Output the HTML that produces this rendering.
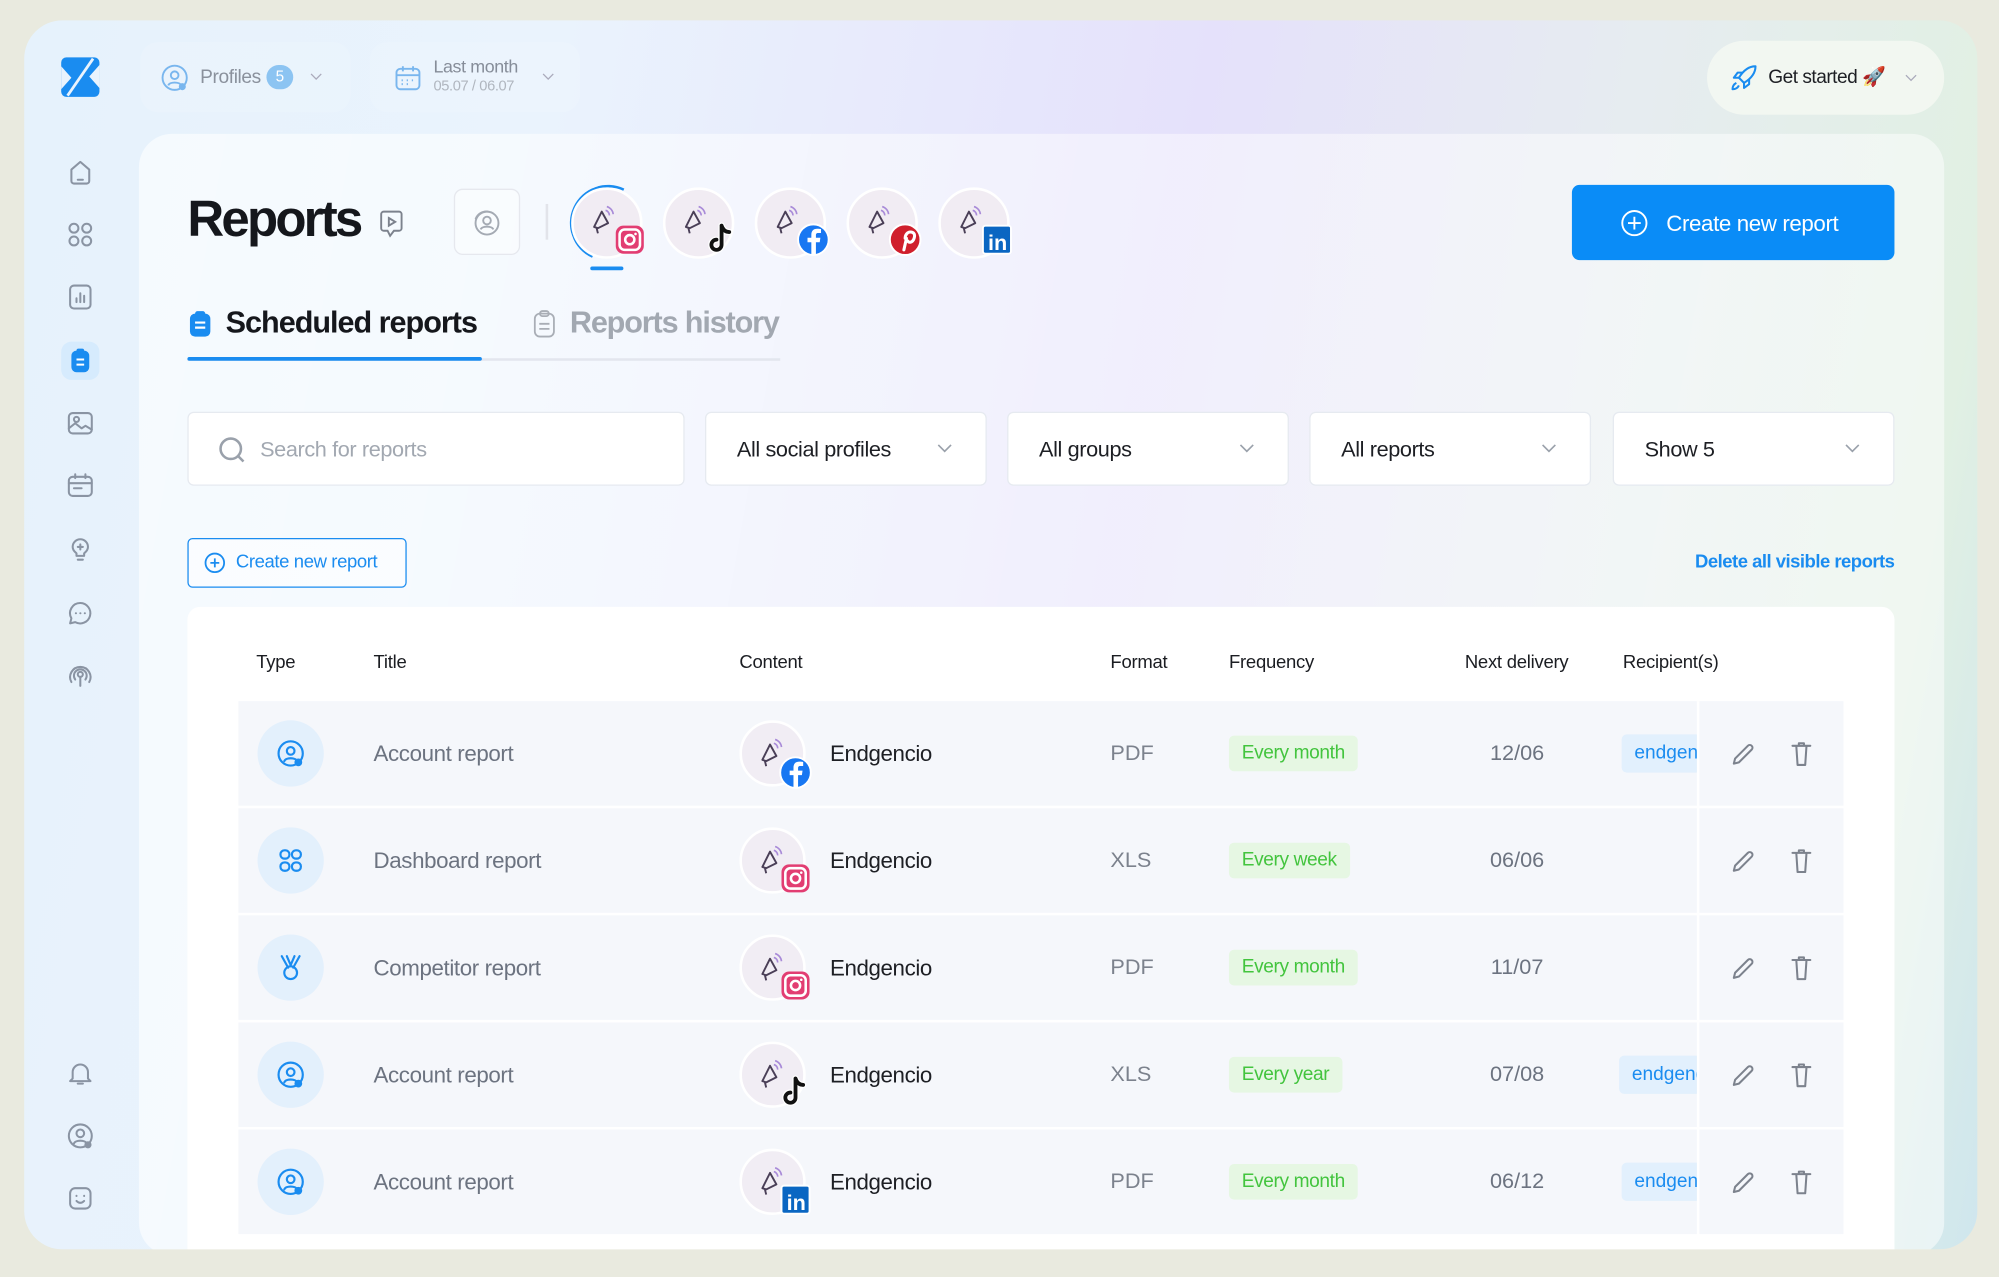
<!DOCTYPE html>
<html><head><meta charset="utf-8">
<style>
*{margin:0;padding:0;box-sizing:border-box}
html,body{width:1999px;height:1277px;overflow:hidden;background:#e9eadf;font-family:"Liberation Sans",sans-serif}
#w{position:absolute;left:0;top:0;width:1568px;height:1002px;transform:scale(1.27487);transform-origin:0 0}
.a{position:absolute}
#card{left:19px;top:16px;width:1532px;height:964px;border-radius:30px;overflow:hidden;
background:linear-gradient(100deg,#e6f2fc 0%,#eaf3fd 25%,#e5e1fb 55%,#e6ecf0 75%,#e1f0e3 92%,#cfe6ee 100%)}
#main{border-radius:26px;background:linear-gradient(100deg,rgba(255,255,255,.6),rgba(255,255,255,.45) 50%,rgba(255,255,255,.5))}
.chip{border-radius:14px;background:rgba(255,255,255,.12)}
.sb svg{position:absolute;width:22px;height:22px;fill:none;stroke:#8a94a3;stroke-width:1.6;stroke-linecap:round;stroke-linejoin:round}
.dd{background:#fff;border:1px solid #e6eaf0;border-radius:5px;height:58px;top:323px;font-size:17px;color:#1d1f24;letter-spacing:-.3px}
.dd span{position:absolute;left:24px;top:19px}
.dd svg{position:absolute;right:26px;top:24px}
.th{top:512px;font-size:14.5px;color:#1b1d22;letter-spacing:-.2px}
.row{left:187px;width:1259px;height:82px;background:#f5f7fb}
.ti{width:52px;height:52px;border-radius:50%;background:#e3f0fc;left:202px}
.ti svg{position:absolute;left:14px;top:14px;width:24px;height:24px;fill:none;stroke:#1a8cf0;stroke-width:1.7;stroke-linecap:round}
.tt{left:293px;font-size:17.5px;color:#6c7380;letter-spacing:-.3px}
.av{width:52px;height:52px;border-radius:50%;background:#f1edf4;border:2px solid #fff;left:580px}
.en{left:651px;font-size:17.5px;color:#1d1f24;letter-spacing:-.3px}
.fm{left:871px;font-size:17px;color:#7c828d}
.fq{height:28px;border-radius:4px;background:#e6f7e3;color:#43c43e;font-size:15px;padding:5px 10px;letter-spacing:-.3px}
.dt{font-size:17px;color:#6c7380;width:80px;text-align:center;left:1150px}
.rc{left:1272px;width:59px;height:30px;border-radius:4px 0 0 4px;background:#e2f0fd;color:#1a8cf0;font-size:15px;padding:6px 0 0 10px;overflow:hidden;white-space:nowrap}
.ic{fill:none;stroke:#7c828d;stroke-width:1.6;stroke-linecap:round;stroke-linejoin:round}
.soc{width:56px;height:56px;border-radius:50%;background:#f1ecf3;border:2px solid #fff;top:147px}
</style></head><body><div id="w">
<div id="card" class="a"></div>
<div id="main" class="a" style="left:109px;top:105px;width:1416px;height:880px"></div>

<!-- logo -->
<svg class="a" style="left:47px;top:44px" width="32" height="33" viewBox="0 0 32 33"><rect x="1" y="1" width="30" height="31" rx="4" fill="#1a8cf0"/><path d="M1 8 L9 17 L1 26Z M31 7 L23 16 L31 25Z" fill="#e9f3fd"/><path d="M26 2 L6 31" stroke="#e9f3fd" stroke-width="2.2"/></svg>

<!-- top chips -->
<div class="a chip" style="left:110px;top:33px;width:165px;height:55px"></div>
<svg class="a" style="left:126px;top:50px" width="22" height="22" viewBox="0 0 22 22" fill="none" stroke="#79b6ee" stroke-width="1.5"><circle cx="11" cy="11" r="9.5"/><circle cx="11" cy="9" r="3"/><path d="M6 17c1-3 9-3 10 0"/><circle cx="17" cy="18" r="2" fill="#79b6ee"/></svg>
<div class="a" style="left:157px;top:52px;font-size:15px;color:#8a919c;letter-spacing:-.3px">Profiles</div>
<div class="a" style="left:209px;top:51px;width:21px;height:19px;border-radius:10px;background:#8cc4f2;color:#fff;font-size:12px;text-align:center;line-height:19px">5</div>
<svg class="a" style="left:243px;top:57px" width="10" height="6"><path d="M1 1l4 4 4-4" stroke="#aab" fill="none"/></svg>
<div class="a chip" style="left:290px;top:33px;width:165px;height:55px"></div>
<svg class="a" style="left:309px;top:50px" width="22" height="22" viewBox="0 0 22 22" fill="none" stroke="#79b6ee" stroke-width="1.5"><rect x="2" y="4" width="18" height="16" rx="3"/><path d="M2 9h18M7 2v4M15 2v4M6 13h1M10 13h1M14 13h1M6 16h1M10 16h1"/></svg>
<div class="a" style="left:340px;top:44px;font-size:14px;color:#868d99;letter-spacing:-.3px">Last month</div>
<div class="a" style="left:340px;top:62px;font-size:11.5px;color:#b0b6bf;letter-spacing:-.3px">05.07 / 06.07</div>
<svg class="a" style="left:425px;top:57px" width="10" height="6"><path d="M1 1l4 4 4-4" stroke="#aab" fill="none"/></svg>

<!-- get started -->
<div class="a" style="left:1339px;top:32px;width:186px;height:58px;border-radius:29px;background:rgba(244,248,242,.85)"></div>
<svg class="a" style="left:1357px;top:50px" width="22" height="22" viewBox="0 0 22 22" fill="none" stroke="#1a8cf0" stroke-width="1.6" stroke-linejoin="round"><path d="M20 2c-6 0-10 4-13 9l4 4c5-3 9-7 9-13z"/><path d="M7 11l-4 0 3-4h4M11 15v4l4-3v-4"/><path d="M5 15c-2 1-3 3-3 5 2 0 4-1 5-3"/></svg>
<div class="a" style="left:1387px;top:51px;font-size:15px;color:#1d1f24;letter-spacing:-.4px">Get started 🚀</div>
<svg class="a" style="left:1494px;top:58px" width="10" height="6"><path d="M1 1l4 4 4-4" stroke="#aab" fill="none"/></svg>

<!-- sidebar -->
<div class="sb">
<svg style="left:52px;top:124px" viewBox="0 0 22 22"><path d="M4 9l7-6 7 6v9a2 2 0 01-2 2H6a2 2 0 01-2-2z"/><path d="M9 17h4"/></svg>
<svg style="left:52px;top:173px" viewBox="0 0 22 22"><circle cx="6" cy="6" r="3.5"/><circle cx="16" cy="6" r="3.5"/><circle cx="6" cy="16" r="3.5"/><circle cx="16" cy="16" r="3.5"/></svg>
<svg style="left:52px;top:222px" viewBox="0 0 22 22"><rect x="3" y="2" width="16" height="18" rx="3"/><path d="M8 15v-3M11 15V8M14 15v-5"/></svg>
<svg style="left:52px;top:321px" viewBox="0 0 22 22"><rect x="2" y="3" width="18" height="16" rx="3"/><circle cx="8" cy="8" r="2"/><path d="M2 15l5-4 5 4 3-2 5 3"/></svg>
<svg style="left:52px;top:370px" viewBox="0 0 22 22"><rect x="2" y="4" width="18" height="15" rx="3"/><path d="M2 9h18M7 2v3M15 2v3M6 13h6"/></svg>
<svg style="left:52px;top:420px" viewBox="0 0 22 22"><path d="M5 9a6 6 0 0112 0c0 3-2 4-3 5v2H8v-2c-1-1-3-2-3-5z"/><path d="M9 19h4M11 7v4M9 9h4"/></svg>
<svg style="left:52px;top:470px" viewBox="0 0 22 22"><path d="M11 3a8 8 0 00-7 12l-1 4 4-1a8 8 0 104-15z"/><path d="M7.5 11h.1M11 11h.1M14.5 11h.1"/></svg>
<svg style="left:52px;top:519px" viewBox="0 0 22 22"><circle cx="11" cy="10" r="2"/><path d="M11 12v7M7 14a5 5 0 118 0M4 16a8 8 0 1114 0"/></svg>
<svg style="left:52px;top:831px" viewBox="0 0 22 22"><path d="M5 15V10a6 6 0 0112 0v5l2 2H3z"/><path d="M9 19h4"/></svg>
<svg style="left:52px;top:880px" viewBox="0 0 22 22"><circle cx="11" cy="11" r="9"/><circle cx="11" cy="9" r="3"/><path d="M6 17c1-3 9-3 10 0"/><circle cx="17" cy="18" r="2" fill="#8a94a3"/></svg>
<svg style="left:52px;top:929px" viewBox="0 0 22 22"><rect x="3" y="3" width="16" height="16" rx="4"/><path d="M8 9v.1M14 9v.1M8 13c2 2 4 2 6 0"/></svg>
</div>
<div class="a" style="left:48px;top:268px;width:30px;height:30px;border-radius:8px;background:#d6ebfd"></div>
<svg class="a" style="left:54px;top:273px" width="18" height="20" viewBox="0 0 18 20"><rect x="2" y="2" width="14" height="17" rx="4" fill="#1a8cf0"/><rect x="6" y="0.5" width="6" height="3" rx="1.5" fill="#1a8cf0"/><path d="M6 9h6M6 13h6" stroke="#fff" stroke-width="1.6"/></svg>

<!-- title -->
<div class="a" style="left:147px;top:150px;font-size:40px;font-weight:bold;color:#15171c;letter-spacing:-2.2px">Reports</div>
<svg class="a" style="left:296px;top:164px" width="22" height="24" viewBox="0 0 22 24" fill="none" stroke="#7c828d" stroke-width="1.5"><path d="M3 4a2 2 0 012-2h12a2 2 0 012 2v11a2 2 0 01-2 2h-4l-3 4-2-4H5a2 2 0 01-2-2z"/><path d="M9 7l5 3-5 3z"/></svg>
<div class="a" style="left:356px;top:148px;width:52px;height:52px;border-radius:7px;border:1px solid #e6e8ee;background:rgba(255,255,255,.4)"></div>
<svg class="a" style="left:370px;top:163px" width="24" height="24" viewBox="0 0 24 24" fill="none" stroke="#a4aab3" stroke-width="1.5"><circle cx="12" cy="12" r="9"/><circle cx="12" cy="10" r="3"/><path d="M7 17c1-3 9-3 10 0"/><path d="M3 9a9 9 0 0110-6"/></svg>
<div class="a" style="left:428px;top:160px;width:2px;height:28px;background:#e2e4ea"></div>

<!-- social circles -->
<div class="a" style="left:447px;top:145px;width:60px;height:60px;border-radius:50%;border:2px solid #1a8cf0;border-right-color:transparent;border-bottom-color:transparent;transform:rotate(-20deg)"></div>
<div class="a" style="left:463px;top:209px;width:26px;height:3px;background:#1a8cf0;border-radius:2px"></div>

<svg width="0" height="0" style="position:absolute"><defs>
<g id="mg"><path d="M-6 4l6-12 5 9-8 4z M-4 5l1 4" fill="none" stroke="#4a3f57" stroke-width="1.5" stroke-linejoin="round"/><path d="M3-9a4 4 0 013 4M4-12a7 7 0 015 6" fill="none" stroke="#a98bd8" stroke-width="1.3"/></g>
<g id="ig"><rect x="-11" y="-11" width="22" height="22" rx="6" fill="#e23d72"/><rect x="-8" y="-8" width="16" height="16" rx="4" fill="none" stroke="#fff" stroke-width="2"/><circle r="3.6" fill="none" stroke="#fff" stroke-width="2"/><circle cx="4.5" cy="-4.5" r="1" fill="#fff"/></g>
<g id="fb"><circle r="12" fill="#1877f2" stroke="#fff" stroke-width="1.5"/><path d="M2 12V2h3l.5-3.5H2v-2c0-1 .4-1.7 1.8-1.7H6v-3.2c-.5 0-1.7-.2-3-.2-3 0-4.6 1.7-4.6 4.8v2.3h-3V2h3v10z" fill="#fff"/></g>
<g id="pi"><circle r="12" fill="#d01f2c" stroke="#fff" stroke-width="1.5"/><path d="M-1 8l2-9M0-1c0-3 2-5 4-5 3 0 4 2 3 5-1 3-4 4-5 2" fill="none" stroke="#fff" stroke-width="2.4" stroke-linecap="round"/></g>
<g id="li"><rect x="-11" y="-11" width="22" height="22" rx="2" fill="#0a66c2" stroke="#fff" stroke-width="1.5"/><text x="-7" y="8" font-family="Liberation Sans" font-weight="bold" font-size="17" fill="#fff">in</text></g>
<g id="tk"><path d="M0-11v15a4 4 0 11-4-4M0-11c1 3 3 5 6 5" fill="none" stroke="#fff" stroke-width="5" stroke-linecap="round"/><path d="M0-11v15a4 4 0 11-4-4M0-11c1 3 3 5 6 5" fill="none" stroke="#111" stroke-width="3" stroke-linecap="round"/></g>
</defs></svg>

<div class="a soc" style="left:448px"></div>
<div class="a soc" style="left:520px"></div>
<div class="a soc" style="left:592px"></div>
<div class="a soc" style="left:664px"></div>
<div class="a soc" style="left:736px"></div>
<svg class="a" style="left:440px;top:140px" width="370" height="80">
<use href="#mg" x="32" y="34"/><use href="#ig" x="54" y="48"/>
<use href="#mg" x="104" y="34"/><use href="#tk" x="126" y="48"/>
<use href="#mg" x="176" y="34"/><use href="#fb" x="198" y="48"/>
<use href="#mg" x="248" y="34"/><use href="#pi" x="270" y="48"/>
<use href="#mg" x="320" y="34"/><use href="#li" x="342" y="48"/>
</svg>

<!-- create button -->
<div class="a" style="left:1233px;top:145px;width:253px;height:59px;border-radius:6px;background:#0a8cf7"></div>
<svg class="a" style="left:1271px;top:164px" width="22" height="22" fill="none" stroke="#fff" stroke-width="1.5"><circle cx="11" cy="11" r="9.5"/><path d="M11 6v10M6 11h10"/></svg>
<div class="a" style="left:1307px;top:165px;font-size:17.5px;color:#fff;letter-spacing:-.3px">Create new report</div>

<!-- tabs -->
<svg class="a" style="left:148px;top:243px" width="18" height="22" viewBox="0 0 18 22"><rect x="1" y="3" width="16" height="18" rx="4" fill="#1a8cf0"/><rect x="5" y="1" width="8" height="4" rx="2" fill="#1a8cf0"/><path d="M5 10h8M5 14h8" stroke="#fff" stroke-width="1.7"/></svg>
<div class="a" style="left:177px;top:240px;font-size:24px;font-weight:bold;color:#15171c;letter-spacing:-.8px">Scheduled reports</div>
<svg class="a" style="left:418px;top:243px" width="18" height="22" viewBox="0 0 18 22" fill="none" stroke="#a9aeb6" stroke-width="1.4"><rect x="1.5" y="3" width="15" height="18" rx="4"/><rect x="5.5" y="1" width="7" height="4" rx="2"/><path d="M5 11h8M5 15h8"/></svg>
<div class="a" style="left:447px;top:240px;font-size:24px;font-weight:bold;color:#a2a8b1;letter-spacing:-.9px">Reports history</div>
<div class="a" style="left:147px;top:281px;width:465px;height:2px;background:#e3e6ee"></div>
<div class="a" style="left:147px;top:280px;width:231px;height:3px;background:#1a8cf0;border-radius:2px"></div>

<!-- filters -->
<div class="a dd" style="left:147px;width:390px"><span style="left:56px;color:#a2a8b1">Search for reports</span></div>
<svg class="a" style="left:171px;top:342px" width="22" height="22" fill="none" stroke="#9aa1ab" stroke-width="2"><circle cx="10" cy="10" r="8"/><path d="M16 16l4 4"/></svg>
<div class="a dd" style="left:553px;width:221px"><span>All social profiles</span><svg width="12" height="7"><path d="M1 1l5 5 5-5" stroke="#9aa1ab" fill="none" stroke-width="1.3"/></svg></div>
<div class="a dd" style="left:790px;width:221px"><span>All groups</span><svg width="12" height="7"><path d="M1 1l5 5 5-5" stroke="#9aa1ab" fill="none" stroke-width="1.3"/></svg></div>
<div class="a dd" style="left:1027px;width:221px"><span>All reports</span><svg width="12" height="7"><path d="M1 1l5 5 5-5" stroke="#9aa1ab" fill="none" stroke-width="1.3"/></svg></div>
<div class="a dd" style="left:1265px;width:221px"><span>Show 5</span><svg width="12" height="7"><path d="M1 1l5 5 5-5" stroke="#9aa1ab" fill="none" stroke-width="1.3"/></svg></div>

<div class="a" style="left:147px;top:422px;width:172px;height:39px;border:1.5px solid #1a8cf0;border-radius:4px;background:rgba(255,255,255,.5)"></div>
<svg class="a" style="left:160px;top:433px" width="17" height="17" fill="none" stroke="#1a8cf0" stroke-width="1.4"><circle cx="8.5" cy="8.5" r="7.3"/><path d="M8.5 5v7M5 8.5h7"/></svg>
<div class="a" style="left:185px;top:433px;font-size:14.5px;color:#1a8cf0;letter-spacing:-.3px">Create new report</div>
<div class="a" style="left:1300px;top:433px;width:186px;text-align:right;font-size:14.5px;font-weight:bold;color:#1a8cf0;letter-spacing:-.4px">Delete all visible reports</div>

<!-- table -->
<div class="a" style="left:147px;top:476px;width:1339px;height:520px;background:#fff;border-radius:10px"></div>
<div class="a th" style="left:201px">Type</div>
<div class="a th" style="left:293px">Title</div>
<div class="a th" style="left:580px">Content</div>
<div class="a th" style="left:871px">Format</div>
<div class="a th" style="left:964px">Frequency</div>
<div class="a th" style="left:1149px">Next delivery</div>
<div class="a th" style="left:1273px">Recipient(s)</div>

<div class="a row" style="top:550px"></div>
<div class="a row" style="top:634px"></div>
<div class="a row" style="top:718px"></div>
<div class="a row" style="top:802px"></div>
<div class="a row" style="top:886px"></div>
<div class="a" style="left:1331px;top:550px;width:2px;height:420px;background:#fff"></div>

<div class="a ti" style="top:565px"><svg viewBox="0 0 24 24"><circle cx="12" cy="12" r="9.5"/><circle cx="12" cy="10" r="3"/><path d="M7 18c1-3 9-3 10 0"/><circle cx="18" cy="19" r="2.2" fill="#1a8cf0"/></svg></div>
<div class="a ti" style="top:649px"><svg viewBox="0 0 24 24"><rect x="4" y="4" width="7" height="6.5" rx="3"/><rect x="13" y="4" width="7" height="6.5" rx="3"/><rect x="4" y="13.5" width="7" height="6.5" rx="3"/><rect x="13" y="13.5" width="7" height="6.5" rx="3"/></svg></div>
<div class="a ti" style="top:733px"><svg viewBox="0 0 24 24"><circle cx="12" cy="16" r="5"/><path d="M5 3l5 9M19 3l-5 9M9 3l3 7M15 3l-3 7"/></svg></div>
<div class="a ti" style="top:817px"><svg viewBox="0 0 24 24"><circle cx="12" cy="12" r="9.5"/><circle cx="12" cy="10" r="3"/><path d="M7 18c1-3 9-3 10 0"/><circle cx="18" cy="19" r="2.2" fill="#1a8cf0"/></svg></div>
<div class="a ti" style="top:901px"><svg viewBox="0 0 24 24"><circle cx="12" cy="12" r="9.5"/><circle cx="12" cy="10" r="3"/><path d="M7 18c1-3 9-3 10 0"/><circle cx="18" cy="19" r="2.2" fill="#1a8cf0"/></svg></div>

<div class="a tt" style="top:581px">Account report</div>
<div class="a tt" style="top:665px">Dashboard report</div>
<div class="a tt" style="top:749px">Competitor report</div>
<div class="a tt" style="top:833px">Account report</div>
<div class="a tt" style="top:917px">Account report</div>

<div class="a av" style="top:565px"></div>
<div class="a av" style="top:649px"></div>
<div class="a av" style="top:733px"></div>
<div class="a av" style="top:817px"></div>
<div class="a av" style="top:901px"></div>
<svg class="a" style="left:570px;top:550px" width="80" height="420">
<use href="#mg" x="34" y="42"/><use href="#fb" x="54" y="56"/>
<use href="#mg" x="34" y="126"/><use href="#ig" x="54" y="139"/>
<use href="#mg" x="34" y="210"/><use href="#ig" x="54" y="223"/>
<use href="#mg" x="34" y="294"/><use href="#tk" x="54" y="307"/>
<use href="#mg" x="34" y="378"/><use href="#li" x="54" y="391"/>
</svg>

<div class="a en" style="top:581px">Endgencio</div>
<div class="a en" style="top:665px">Endgencio</div>
<div class="a en" style="top:749px">Endgencio</div>
<div class="a en" style="top:833px">Endgencio</div>
<div class="a en" style="top:917px">Endgencio</div>

<div class="a fm" style="top:581px">PDF</div>
<div class="a fm" style="top:665px">XLS</div>
<div class="a fm" style="top:749px">PDF</div>
<div class="a fm" style="top:833px">XLS</div>
<div class="a fm" style="top:917px">PDF</div>

<div class="a fq" style="left:964px;top:577px">Every month</div>
<div class="a fq" style="left:964px;top:661px">Every week</div>
<div class="a fq" style="left:964px;top:745px">Every month</div>
<div class="a fq" style="left:964px;top:829px">Every year</div>
<div class="a fq" style="left:964px;top:913px">Every month</div>

<div class="a dt" style="top:581px">12/06</div>
<div class="a dt" style="top:665px">06/06</div>
<div class="a dt" style="top:749px">11/07</div>
<div class="a dt" style="top:833px">07/08</div>
<div class="a dt" style="top:917px">06/12</div>

<div class="a rc" style="top:576px">endgencio</div>
<div class="a rc" style="top:828px;left:1270px;width:61px">endgencio</div>
<div class="a rc" style="top:912px">endgencio</div>

<svg class="a" style="left:1350px;top:570px" width="80" height="380">
<g class="ic" transform="translate(-8 0)">
<path d="M22 28l-4 1 1-4 10-10a2.1 2.1 0 013 3z"/>
<path d="M22 112l-4 1 1-4 10-10a2.1 2.1 0 013 3z"/>
<path d="M22 196l-4 1 1-4 10-10a2.1 2.1 0 013 3z"/>
<path d="M22 280l-4 1 1-4 10-10a2.1 2.1 0 013 3z"/>
<path d="M22 364l-4 1 1-4 10-10a2.1 2.1 0 013 3z"/>
</g>
<g class="ic">
<path d="M56 15h14M59 15l1 15h6l1-15M61 15v-2h4v2"/>
<path d="M56 99h14M59 99l1 15h6l1-15M61 99v-2h4v2"/>
<path d="M56 183h14M59 183l1 15h6l1-15M61 183v-2h4v2"/>
<path d="M56 267h14M59 267l1 15h6l1-15M61 267v-2h4v2"/>
<path d="M56 351h14M59 351l1 15h6l1-15M61 351v-2h4v2"/>
</g></svg>

<div class="a" style="left:0;top:980px;width:1568px;height:22px;background:#e9eadf"></div>
</div></body></html>
